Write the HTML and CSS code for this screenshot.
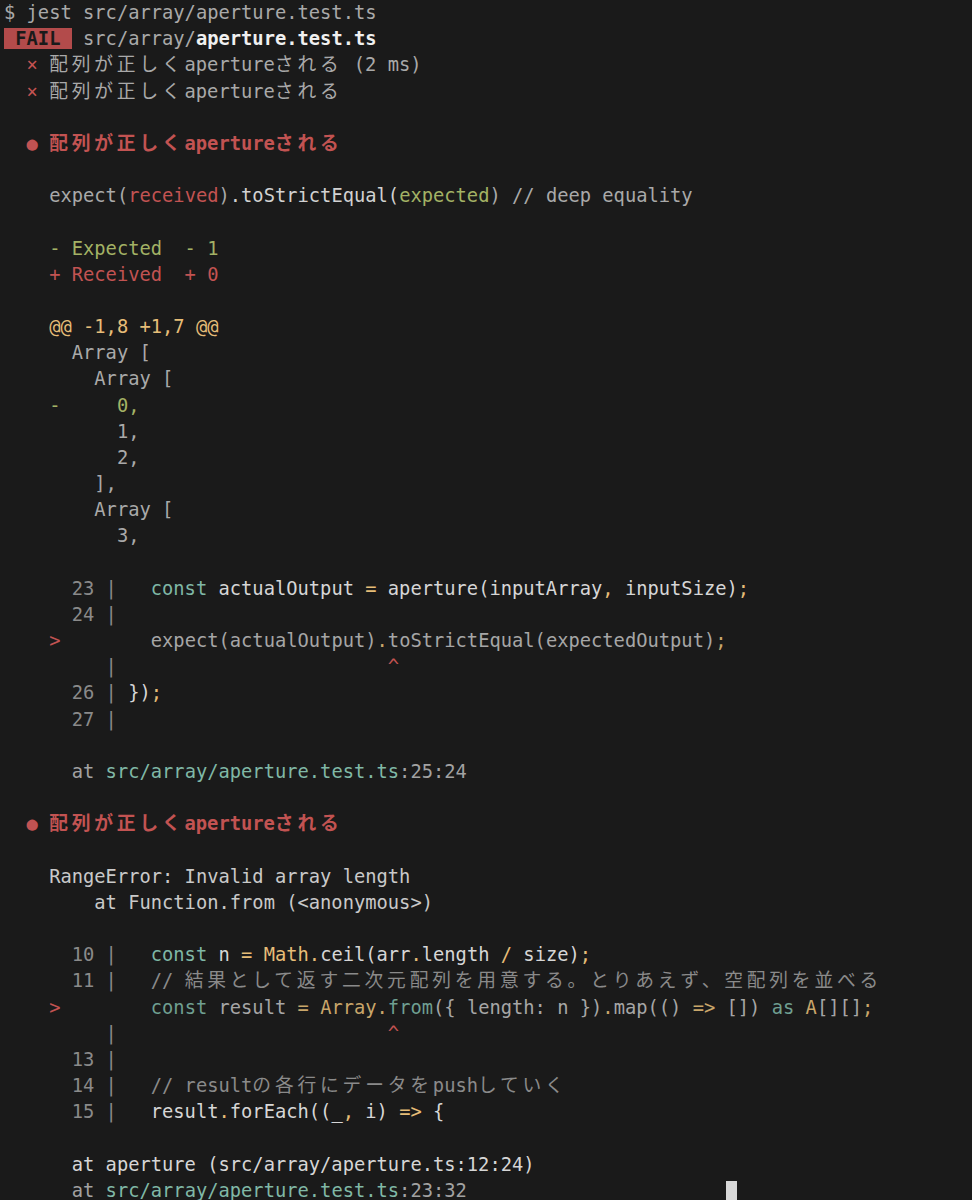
FILE: index.html
```html
<!DOCTYPE html>
<html lang="ja">
<head>
<meta charset="utf-8">
<title>jest</title>
<link rel="stylesheet" href="styles.css">
</head>
<body>
<div class="term">
<div class="ln">$ jest src/array/aperture.test.ts</div>
<div class="ln"><span class="fail"> FAIL </span> src/array/<span class="hl">aperture.test.ts</span></div>
<div class="ln">  <span class="red">×</span> <span class="w">配列が正しく</span>aperture<span class="w">される</span> (2 ms)</div>
<div class="ln">  <span class="red">×</span> <span class="w">配列が正しく</span>aperture<span class="w">される</span></div>
<div class="ln"></div>
<div class="ln red b">  ● <span class="w">配列が正しく</span>aperture<span class="w">される</span></div>
<div class="ln"></div>
<div class="ln">    expect(<span class="red">received</span>)<span class="lt">.toStrictEqual(</span><span class="grn">expected</span>) // deep equality</div>
<div class="ln"></div>
<div class="ln grn">    - Expected  - 1</div>
<div class="ln red">    + Received  + 0</div>
<div class="ln"></div>
<div class="ln yel">    @@ -1,8 +1,7 @@</div>
<div class="ln">      Array [</div>
<div class="ln">        Array [</div>
<div class="ln grn">    -     0,</div>
<div class="ln">          1,</div>
<div class="ln">          2,</div>
<div class="ln">        ],</div>
<div class="ln">        Array [</div>
<div class="ln">          3,</div>
<div class="ln"></div>
<div class="ln code"><span class="num">      23 |   </span><span class="kw">const</span> actualOutput <span class="yel">=</span> aperture(inputArray<span class="yel">,</span> inputSize)<span class="yel">;</span></div>
<div class="ln code"><span class="num">      24 |</span></div>
<div class="ln code"><span class="red">    &gt;</span>        <span class="dim">expect(actualOutput)<span class="yel">.</span>toStrictEqual(expectedOutput)<span class="yel">;</span></span></div>
<div class="ln code"><span class="num">         |</span>                        <span class="red">^</span></div>
<div class="ln code"><span class="num">      26 | </span>})<span class="yel">;</span></div>
<div class="ln code"><span class="num">      27 |</span></div>
<div class="ln"></div>
<div class="ln code"><span class="gry">      at </span><span class="teal">src/array/aperture.test.ts</span><span class="gry">:25:24</span></div>
<div class="ln"></div>
<div class="ln red b">  ● <span class="w">配列が正しく</span>aperture<span class="w">される</span></div>
<div class="ln"></div>
<div class="ln lt2">    RangeError: Invalid array length</div>
<div class="ln lt2">        at Function.from (&lt;anonymous&gt;)</div>
<div class="ln"></div>
<div class="ln code"><span class="num">      10 |   </span><span class="kw">const</span> n <span class="yel">=</span> <span class="yel">Math.</span>ceil(arr<span class="yel">.</span>length <span class="yel">/</span> size)<span class="yel">;</span></div>
<div class="ln code"><span class="num">      11 |   // <span class="w">結果として返す二次元配列を用意する。とりあえず、空配列を並べる</span></span></div>
<div class="ln code"><span class="red">    &gt;</span>        <span class="dim"><span class="kw">const</span> result <span class="yel">=</span> <span class="yel">Array.</span><span class="kw">from</span>({ length: n })<span class="yel">.</span>map(() <span class="yel">=&gt;</span> []) <span class="kw">as</span> <span class="yel">A</span>[][]<span class="yel">;</span></span></div>
<div class="ln code"><span class="num">         |</span>                        <span class="red">^</span></div>
<div class="ln code"><span class="num">      13 |</span></div>
<div class="ln code"><span class="num">      14 |   // result<span class="w">の各行にデータを</span>push<span class="w">していく</span></span></div>
<div class="ln code"><span class="num">      15 |   </span>result<span class="yel">.</span>forEach((_<span class="yel">,</span> i) <span class="yel">=&gt;</span> {</div>
<div class="ln"></div>
<div class="ln code gry">      at aperture (src/array/aperture.ts:12:24)</div>
<div class="ln code"><span class="gry">      at </span><span class="teal">src/array/aperture.test.ts</span><span class="gry">:23:32</span>                       <span class="cursor"></span></div>
</div>
</body>
</html>
```

FILE: styles.css
```css
html, body {
  margin: 0;
  padding: 0;
  background: #1a1a1a;
}

.term {
  padding: 0 0 0 4px;
  font-family: "DejaVu Sans Mono", "Noto Sans CJK JP", monospace;
  font-size: 18.75px;
  line-height: 26.18px;
  color: #a9a9a9;
  height: 1200px;
  overflow: hidden;
}

.ln {
  height: 26.18px;
  line-height: 26.18px;
  white-space: pre;
}

.w {
  font-family: "Noto Sans CJK JP", sans-serif;
  letter-spacing: 3.81px;
  line-height: 1;
}

.fail {
  background: #b34b4b;
  color: #1a1a1a;
  font-weight: bold;
}

.hl {
  color: #f0f0f0;
  font-weight: bold;
}

.b {
  font-weight: bold;
}

.red { color: #c25352; }
.grn { color: #a3b265; }
.yel { color: #e6bd78; }
.teal { color: #80b8a6; }
.lt { color: #d2d2d2; }
.lt2 { color: #c9c9c9; }
.gry { color: #a2a2a2; }

.code {
  color: #d6d6d6;
}

.num {
  color: #8a8a8a;
}

.kw {
  color: #7fb7a6;
}

.dim {
  color: #a6a6a6;
}

.dim .kw {
  color: #6f9f91;
}

.dim .yel {
  color: #c9a66a;
}

.cursor {
  display: inline-block;
  width: 11px;
  height: 26px;
  background: #d8d8d8;
  vertical-align: -10px;
}
```
